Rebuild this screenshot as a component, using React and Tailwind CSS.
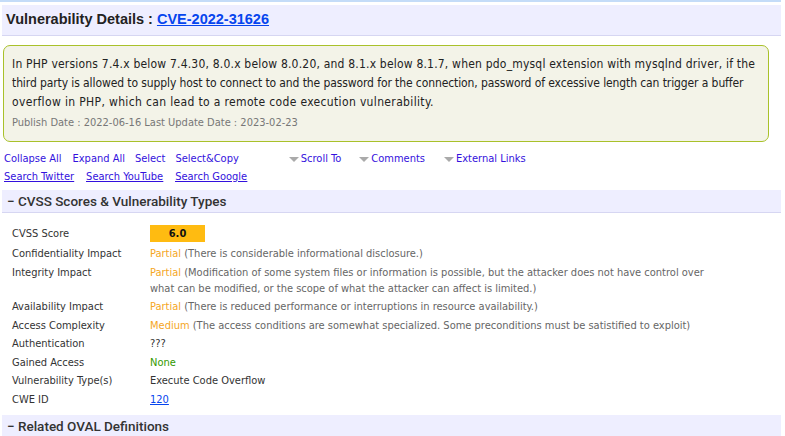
const rows = [
  { label: "Confidentiality Impact", level: "Partial", tone: "text-[#f5a623]", note: "(There is considerable informational disclosure.)" },
  {
    label: "Integrity Impact",
    level: "Partial",
    tone: "text-[#f5a623]",
    note: "(Modification of some system files or information is possible, but the attacker does not have control over what can be modified, or the scope of what the attacker can affect is limited.)",
  },
  { label: "Availability Impact", level: "Partial", tone: "text-[#f5a623]", note: "(There is reduced performance or interruptions in resource availability.)" },
  {
    label: "Access Complexity",
    level: "Medium",
    tone: "text-[#f5a623]",
    note: "(The access conditions are somewhat specialized. Some preconditions must be satistified to exploit)",
  },
  { label: "Authentication", level: "???", tone: "text-[#333]", note: "" },
  { label: "Gained Access", level: "None", tone: "text-[#339900]", note: "" },
];

const body = "font-['Tahoma','DejaVu_Sans_Condensed','DejaVu_Sans',sans-serif]";
const head = "font-['Liberation_Sans',Arial,sans-serif]";
const section = "font-['Roboto','Liberation_Sans',sans-serif]";

function Caret() {
  return <span className="mr-[2px] inline-block h-0 w-0 border-x-[5px] border-t-[5px] border-x-transparent border-t-[#aaa] align-middle" />;
}

export default function App() {
  return (
    <div className={`min-h-[436px] w-[785px] bg-white pr-1 text-[#333] ${body}`}>
      <div className="h-[2px] bg-[#c4dcf8]" />
      <div className="mt-[3px] ml-[2px] flex h-[31px] items-center border-b border-[#d6d6f2] bg-[#eeeeff] pl-[4px]">
        <h1 className={`text-[14.5px] font-bold text-[#222] ${head}`}>
          Vulnerability Details :{" "}
          <a href="#" className="text-[#0645ee] underline">
            CVE-2022-31626
          </a>
        </h1>
      </div>

      <div className="mt-[9px] ml-[3px] w-[766px] rounded-[7px] border border-[#a9c12a] bg-[#f3f3e8] px-[8px] pt-[9px] pb-[9px]">
        <p className="whitespace-nowrap text-[12px] leading-[19px] text-[#222]">
          <span className="block tracking-[0.2px]">
            In PHP versions 7.4.x below 7.4.30, 8.0.x below 8.0.20, and 8.1.x below 8.1.7, when pdo_mysql extension with mysqlnd driver, if the
          </span>
          <span className="block tracking-[-0.1px]">
            third party is allowed to supply host to connect to and the password for the connection, password of excessive length can trigger a buffer
          </span>
          <span className="block tracking-[0.35px]">overflow in PHP, which can lead to a remote code execution vulnerability.</span>
        </p>
        <p className="mt-[1px] text-[11px] leading-[19px] text-[#777]">Publish Date : 2022-06-16 Last Update Date : 2023-02-23</p>
      </div>

      <div className="mt-[8px] pl-[4px] text-[11px] leading-[18px] text-[#3311dd]">
        <div className="flex">
          <a href="#" className="mr-[11px]">Collapse All</a>
          <a href="#" className="mr-[10px]">Expand All</a>
          <a href="#" className="mr-[10px]">Select</a>
          <a href="#">Select&amp;Copy</a>
          <span className="ml-[50px] mr-[18px]"><Caret />Scroll To</span>
          <span className="mr-[19px]"><Caret />Comments</span>
          <span><Caret />External Links</span>
        </div>
        <div className="flex gap-[12px] underline">
          <a href="#">Search Twitter</a>
          <a href="#">Search YouTube</a>
          <a href="#">Search Google</a>
        </div>
      </div>

      <div className={`mt-[4px] ml-[2px] flex h-[23px] items-center border-b border-[#d6d6f2] bg-[#eeeeff] pl-[5px] text-[13.5px] font-medium text-[#333] ${section}`}>
        − CVSS Scores &amp; Vulnerability Types
      </div>

      <div className="pt-[12px] pl-[12px] text-[11px] leading-[16px]">
        <div className="mb-[3px] flex items-center">
          <span className="w-[138px]">CVSS Score</span>
          <span className="flex h-[17px] w-[55px] items-center justify-center bg-[#ffbb11] font-bold text-[#111]">6.0</span>
        </div>
        {rows.map((r) => (
          <div key={r.label} className="flex pt-[1.25px] pb-[1.25px]">
            <span className="w-[138px] shrink-0">{r.label}</span>
            <span className="w-[580px] text-[#666]">
              <span className={r.tone}>{r.level}</span> {r.note}
            </span>
          </div>
        ))}
        <div className="flex pt-[1.25px] pb-[1.25px]">
          <span className="w-[138px]">Vulnerability Type(s)</span>
          <span>Execute Code Overflow</span>
        </div>
        <div className="flex pt-[1.25px] pb-[1.25px]">
          <span className="w-[138px]">CWE ID</span>
          <a href="#" className="text-[#0645ee] underline">120</a>
        </div>
      </div>

      <div className={`mt-[6px] ml-[2px] flex h-[23px] items-center bg-[#eeeeff] pl-[5px] text-[13.5px] font-medium text-[#333] ${section}`}>
        − Related OVAL Definitions
      </div>
    </div>
  );
}
